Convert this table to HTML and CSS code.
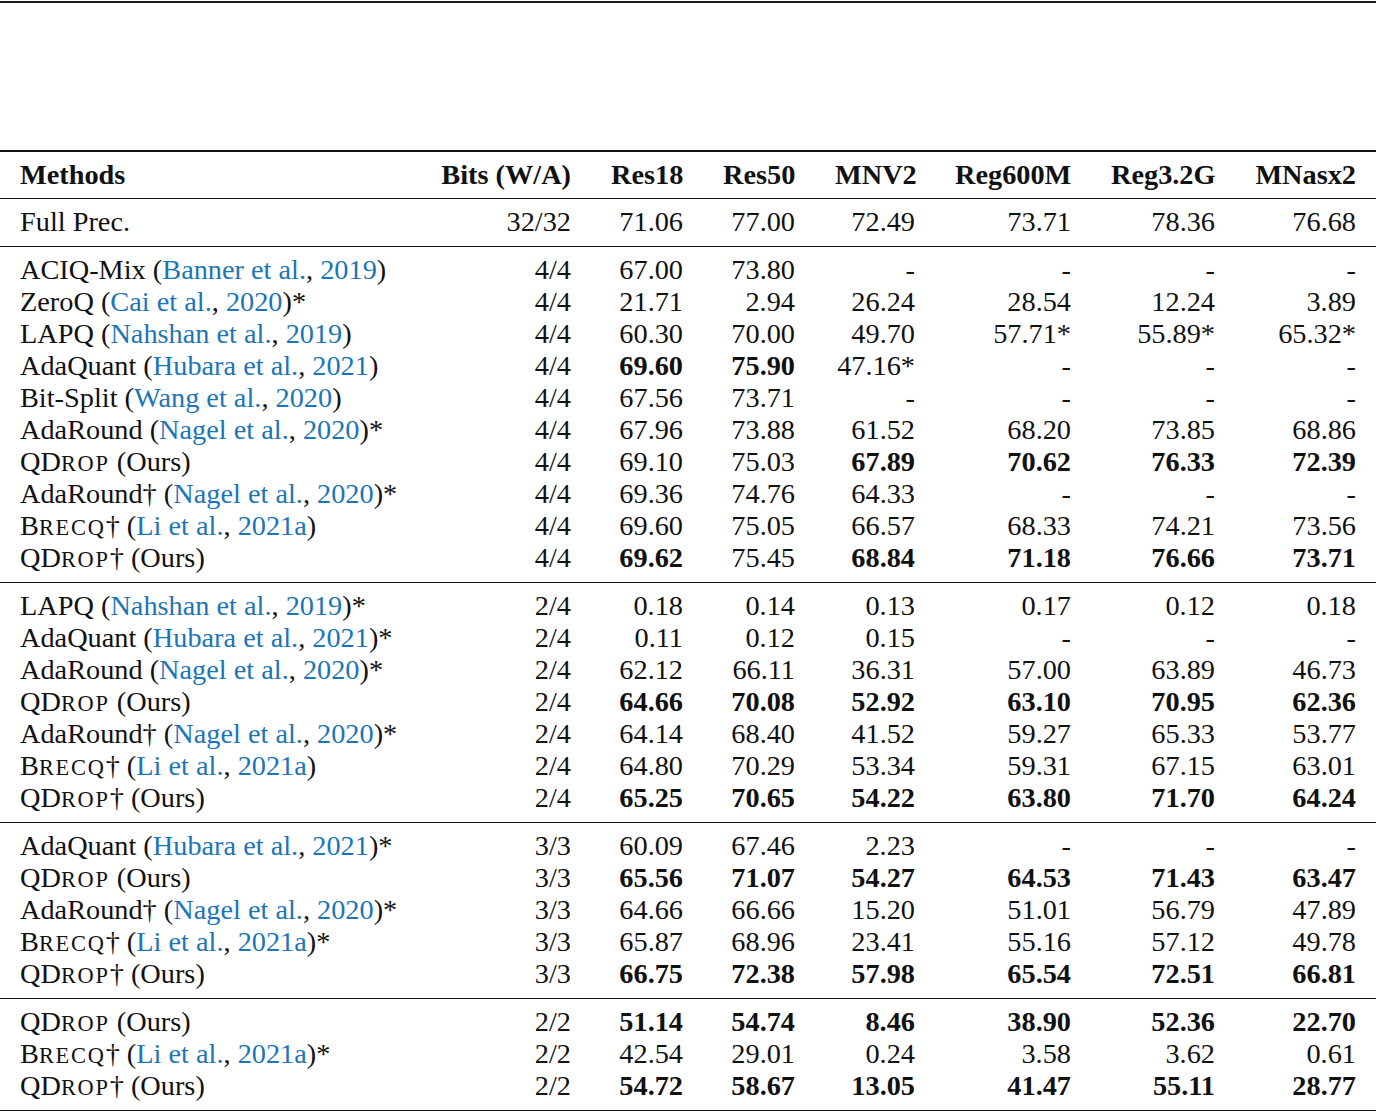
FILE: index.html
```html
<!DOCTYPE html>
<html>
<head>
<meta charset="utf-8">
<link rel="stylesheet" href="styles.css">
</head>
<body>
<div class="page">
<div class="topline"></div>
<div class="spacer"></div>
<table class="results">
<colgroup>
<col class="c-m"><col class="c-bits"><col class="c-r18"><col class="c-r50"><col class="c-mnv"><col class="c-r600"><col class="c-r32"><col class="c-mnas">
</colgroup>
<thead>
<tr><th class="left">Methods</th><th>Bits (W/A)</th><th>Res18</th><th>Res50</th><th>MNV2</th><th>Reg600M</th><th>Reg3.2G</th><th>MNasx2</th></tr>
</thead>
<tbody class="fp">
<tr><td class="left">Full Prec.</td><td>32/32</td><td>71.06</td><td>77.00</td><td>72.49</td><td>73.71</td><td>78.36</td><td>76.68</td></tr>
</tbody>
<tbody class="grp">
<tr><td class="left">ACIQ-Mix (<span class="cite">Banner et al.</span>, <span class="cite">2019</span>)</td><td>4/4</td><td>67.00</td><td>73.80</td><td>-</td><td>-</td><td>-</td><td>-</td></tr>
<tr><td class="left">ZeroQ (<span class="cite">Cai et al.</span>, <span class="cite">2020</span>)*</td><td>4/4</td><td>21.71</td><td>2.94</td><td>26.24</td><td>28.54</td><td>12.24</td><td>3.89</td></tr>
<tr><td class="left">LAPQ (<span class="cite">Nahshan et al.</span>, <span class="cite">2019</span>)</td><td>4/4</td><td>60.30</td><td>70.00</td><td>49.70</td><td>57.71*</td><td>55.89*</td><td>65.32*</td></tr>
<tr><td class="left">AdaQuant (<span class="cite">Hubara et al.</span>, <span class="cite">2021</span>)</td><td>4/4</td><td class="b">69.60</td><td class="b">75.90</td><td>47.16*</td><td>-</td><td>-</td><td>-</td></tr>
<tr><td class="left">Bit-Split (<span class="cite">Wang et al.</span>, <span class="cite">2020</span>)</td><td>4/4</td><td>67.56</td><td>73.71</td><td>-</td><td>-</td><td>-</td><td>-</td></tr>
<tr><td class="left">AdaRound (<span class="cite">Nagel et al.</span>, <span class="cite">2020</span>)*</td><td>4/4</td><td>67.96</td><td>73.88</td><td>61.52</td><td>68.20</td><td>73.85</td><td>68.86</td></tr>
<tr><td class="left">QD<span class="sc">rop</span> (Ours)</td><td>4/4</td><td>69.10</td><td>75.03</td><td class="b">67.89</td><td class="b">70.62</td><td class="b">76.33</td><td class="b">72.39</td></tr>
<tr><td class="left">AdaRound† (<span class="cite">Nagel et al.</span>, <span class="cite">2020</span>)*</td><td>4/4</td><td>69.36</td><td>74.76</td><td>64.33</td><td>-</td><td>-</td><td>-</td></tr>
<tr><td class="left">B<span class="sc">recq</span>† (<span class="cite">Li et al.</span>, <span class="cite">2021a</span>)</td><td>4/4</td><td>69.60</td><td>75.05</td><td>66.57</td><td>68.33</td><td>74.21</td><td>73.56</td></tr>
<tr><td class="left">QD<span class="sc">rop</span>† (Ours)</td><td>4/4</td><td class="b">69.62</td><td>75.45</td><td class="b">68.84</td><td class="b">71.18</td><td class="b">76.66</td><td class="b">73.71</td></tr>
</tbody>
<tbody class="grp">
<tr><td class="left">LAPQ (<span class="cite">Nahshan et al.</span>, <span class="cite">2019</span>)*</td><td>2/4</td><td>0.18</td><td>0.14</td><td>0.13</td><td>0.17</td><td>0.12</td><td>0.18</td></tr>
<tr><td class="left">AdaQuant (<span class="cite">Hubara et al.</span>, <span class="cite">2021</span>)*</td><td>2/4</td><td>0.11</td><td>0.12</td><td>0.15</td><td>-</td><td>-</td><td>-</td></tr>
<tr><td class="left">AdaRound (<span class="cite">Nagel et al.</span>, <span class="cite">2020</span>)*</td><td>2/4</td><td>62.12</td><td>66.11</td><td>36.31</td><td>57.00</td><td>63.89</td><td>46.73</td></tr>
<tr><td class="left">QD<span class="sc">rop</span> (Ours)</td><td>2/4</td><td class="b">64.66</td><td class="b">70.08</td><td class="b">52.92</td><td class="b">63.10</td><td class="b">70.95</td><td class="b">62.36</td></tr>
<tr><td class="left">AdaRound† (<span class="cite">Nagel et al.</span>, <span class="cite">2020</span>)*</td><td>2/4</td><td>64.14</td><td>68.40</td><td>41.52</td><td>59.27</td><td>65.33</td><td>53.77</td></tr>
<tr><td class="left">B<span class="sc">recq</span>† (<span class="cite">Li et al.</span>, <span class="cite">2021a</span>)</td><td>2/4</td><td>64.80</td><td>70.29</td><td>53.34</td><td>59.31</td><td>67.15</td><td>63.01</td></tr>
<tr><td class="left">QD<span class="sc">rop</span>† (Ours)</td><td>2/4</td><td class="b">65.25</td><td class="b">70.65</td><td class="b">54.22</td><td class="b">63.80</td><td class="b">71.70</td><td class="b">64.24</td></tr>
</tbody>
<tbody class="grp">
<tr><td class="left">AdaQuant (<span class="cite">Hubara et al.</span>, <span class="cite">2021</span>)*</td><td>3/3</td><td>60.09</td><td>67.46</td><td>2.23</td><td>-</td><td>-</td><td>-</td></tr>
<tr><td class="left">QD<span class="sc">rop</span> (Ours)</td><td>3/3</td><td class="b">65.56</td><td class="b">71.07</td><td class="b">54.27</td><td class="b">64.53</td><td class="b">71.43</td><td class="b">63.47</td></tr>
<tr><td class="left">AdaRound† (<span class="cite">Nagel et al.</span>, <span class="cite">2020</span>)*</td><td>3/3</td><td>64.66</td><td>66.66</td><td>15.20</td><td>51.01</td><td>56.79</td><td>47.89</td></tr>
<tr><td class="left">B<span class="sc">recq</span>† (<span class="cite">Li et al.</span>, <span class="cite">2021a</span>)*</td><td>3/3</td><td>65.87</td><td>68.96</td><td>23.41</td><td>55.16</td><td>57.12</td><td>49.78</td></tr>
<tr><td class="left">QD<span class="sc">rop</span>† (Ours)</td><td>3/3</td><td class="b">66.75</td><td class="b">72.38</td><td class="b">57.98</td><td class="b">65.54</td><td class="b">72.51</td><td class="b">66.81</td></tr>
</tbody>
<tbody class="grp last">
<tr><td class="left">QD<span class="sc">rop</span> (Ours)</td><td>2/2</td><td class="b">51.14</td><td class="b">54.74</td><td class="b">8.46</td><td class="b">38.90</td><td class="b">52.36</td><td class="b">22.70</td></tr>
<tr><td class="left">B<span class="sc">recq</span>† (<span class="cite">Li et al.</span>, <span class="cite">2021a</span>)*</td><td>2/2</td><td>42.54</td><td>29.01</td><td>0.24</td><td>3.58</td><td>3.62</td><td>0.61</td></tr>
<tr><td class="left">QD<span class="sc">rop</span>† (Ours)</td><td>2/2</td><td class="b">54.72</td><td class="b">58.67</td><td class="b">13.05</td><td class="b">41.47</td><td class="b">55.11</td><td class="b">28.77</td></tr>
</tbody>
</table>
</div>
</body>
</html>
```
FILE: styles.css
```css
html, body {
  margin: 0;
  padding: 0;
  background: #ffffff;
}
.page {
  width: 1376px;
  font-family: "Liberation Serif", "Times New Roman", serif;
  font-size: 28.3px;
  color: #111;
}
.topline {
  height: 2px;
  margin-top: 1px;
  background: #1a1a1a;
}
.spacer {
  height: 147px;
}
.results {
  width: 1376px;
  table-layout: fixed;
  border-collapse: collapse;
  border-top: 2px solid #111;
  border-bottom: 2px solid #111;
}
.c-m { width: 420px; }
.c-bits { width: 171px; }
.c-r18 { width: 112px; }
.c-r50 { width: 112px; }
.c-mnv { width: 120px; }
.c-r600 { width: 156px; }
.c-r32 { width: 144px; }
.c-mnas { width: 141px; }
th, td {
  padding: 0 20px;
  height: 32px;
  line-height: 32px;
  text-align: right;
  white-space: nowrap;
  vertical-align: middle;
}
th {
  font-weight: bold;
  padding-top: 7px;
  padding-bottom: 7px;
}
thead tr {
  border-bottom: 1px solid #111;
}
.fp td {
  padding-top: 7px;
  padding-bottom: 8px;
}
.fp tr {
  border-bottom: 1px solid #111;
}
.grp tr:first-child td {
  padding-top: 7px;
}
.grp tr:last-child td {
  padding-bottom: 8px;
}
.grp tr:last-child {
  border-bottom: 1px solid #111;
}
.grp.last tr:last-child {
  border-bottom: none;
}
.left {
  text-align: left;
}
.b {
  font-weight: bold;
}
.cite {
  color: #1c75b8;
}
.sc {
  text-transform: uppercase;
  font-size: 0.79em;
  letter-spacing: 0.08em;
  line-height: 1;
}
```
